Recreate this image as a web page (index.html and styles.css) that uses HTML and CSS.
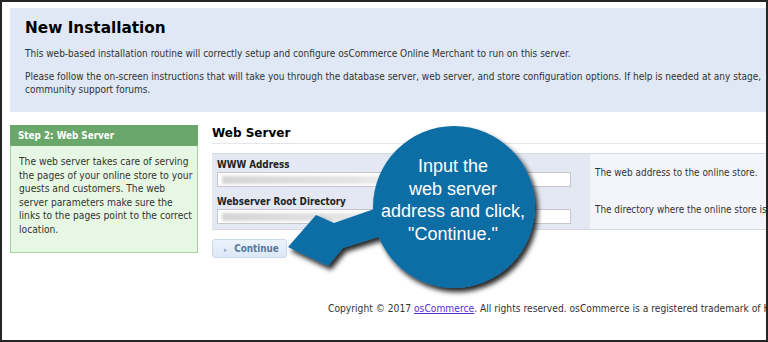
FILE: index.html
```html
<!DOCTYPE html>
<html>
<head>
<meta charset="utf-8">
<link rel="stylesheet" href="styles.css">
</head>
<body>
<div class="frame">
  <div class="page">
    <div class="intro">
      <h1 class="intro-title">New Installation</h1>
      <p class="intro-text">This web-based installation routine will correctly setup and configure osCommerce Online Merchant to run on this server.</p>
      <p class="intro-text">Please follow the on-screen instructions that will take you through the database server, web server, and store configuration options. If help is needed at any stage,<br>community support forums.</p>
    </div>
    <div class="content">
      <div class="step">
        <div class="step-head">Step 2: Web Server</div>
        <div class="step-body">The web server takes care of serving<br>the pages of your online store to your<br>guests and customers. The web<br>server parameters make sure the<br>links to the pages point to the correct<br>location.</div>
      </div>
      <div class="main">
        <h2 class="main-title">Web Server</h2>
        <div class="form">
          <div class="form-fields">
            <div class="field">
              <div class="field-label">WWW Address</div>
              <div class="field-input"><span class="blur blur-long"></span></div>
            </div>
            <div class="field">
              <div class="field-label">Webserver Root Directory</div>
              <div class="field-input field-input-last"><span class="blur blur-short"></span></div>
            </div>
          </div>
          <div class="form-help">
            <div class="help-line help-first">The web address to the online store.</div>
            <div class="help-line">The directory where the online store is installed on the server.</div>
          </div>
        </div>
        <div class="btn"><span class="btn-icon">&#9656;</span>Continue</div>
      </div>
    </div>
    <div class="footer">Copyright &copy; 2017 <a href="#" class="footer-link">osCommerce</a>. All rights reserved. osCommerce is a registered trademark of Harald Ponce de Leon.</div>
  </div>
  <svg class="callout" width="768" height="342" viewBox="0 0 768 342">
    <defs>
      <filter id="sh" x="-20%" y="-20%" width="140%" height="140%">
        <feDropShadow dx="3" dy="4" stdDeviation="2.5" flood-color="#000" flood-opacity="0.85"/>
      </filter>
    </defs>
    <g filter="url(#sh)" fill="#0c6ea6">
      <polygon points="288,247 316,215 334,223 380,207 388,234 343,248 328,266"/>
      <circle cx="454" cy="207" r="81"/>
    </g>
    <g class="callout-text">
      <text x="453" y="172">Input the</text>
      <text x="453" y="195">web server</text>
      <text x="453" y="217">address and click,</text>
      <text x="453" y="240">"Continue."</text>
    </g>
  </svg>
</div>
</body>
</html>
```
FILE: styles.css
```css
html, body {
  margin: 0;
  padding: 0;
  background: #fff;
}
.frame {
  position: relative;
  width: 768px;
  height: 342px;
  box-sizing: border-box;
  border: 2px solid #262626;
  overflow: hidden;
  font-family: "DejaVu Sans Condensed", "DejaVu Sans", sans-serif;
  font-size: 10.2px;
  color: #333;
}
.page {
  width: 1000px;
  padding: 6px 0 0 8px;
}
.intro {
  background: #dfe8f4;
  padding: 10px 15px 10px 15px;
  height: 84px;
}
.intro-title {
  margin: 0 0 9px 0;
  font-family: "DejaVu Sans", sans-serif;
  font-size: 15.3px;
  font-weight: bold;
  color: #000;
  line-height: 20px;
}
.intro-text {
  margin: 0 0 10px 0;
  font-size: 10px;
  line-height: 13px;
  white-space: nowrap;
}
.content {
  display: flex;
  gap: 14px;
  margin-top: 13px;
}
.step {
  width: 188px;
  flex: none;
}
.step-head {
  background: #6aa76a;
  color: #fff;
  font-weight: bold;
  font-size: 9.8px;
  height: 21px;
  line-height: 21px;
  padding-left: 8px;
}
.step-body {
  background: #e6f8e3;
  border: 1px solid #a4d49e;
  border-top: none;
  padding: 9px 8px 0 8px;
  line-height: 13.5px;
  height: 97px;
  white-space: nowrap;
}
.main {
  width: 780px;
}
.main-title {
  margin: 0;
  font-family: "DejaVu Sans", sans-serif;
  font-size: 12px;
  font-weight: bold;
  color: #000;
  line-height: 17px;
  padding-bottom: 1px;
  border-bottom: 1px solid #e4e6ea;
}
.form {
  display: flex;
  margin-top: 9px;
  border-top: 1px solid #d6dbe6;
  border-bottom: 1px solid #d6dbe6;
}
.form-fields {
  width: 378px;
  background: #e4e8f2;
  padding: 4px 0 5px 5px;
  box-sizing: border-box;
}
.field-label {
  font-weight: bold;
  font-size: 9.8px;
  line-height: 13px;
  color: #222;
}
.field-input {
  width: 354px;
  height: 15px;
  background: #fff;
  border: 1px solid #c4c6cc;
  box-sizing: border-box;
  margin: 1px 0 8px 0;
  overflow: hidden;
}
.field-input-last {
  margin-bottom: 0;
}
.blur {
  display: block;
  height: 8px;
  margin: 3px 0 0 4px;
  background: linear-gradient(90deg, #d4d4d4, #e4e4e4 60%, #fff);
  filter: blur(1.5px);
}
.blur-long { width: 220px; }
.blur-short { width: 200px; }
.form-help {
  flex: 1;
  background: #f4f5fb;
  padding: 12px 0 0 5px;
  font-size: 9.9px;
}
.help-line {
  line-height: 13px;
  white-space: nowrap;
}
.help-first {
  margin-bottom: 24px;
}
.btn {
  display: inline-block;
  margin-top: 9px;
  width: 75px;
  height: 19px;
  box-sizing: border-box;
  border: 1px solid #c9d8ea;
  border-radius: 3px;
  background: linear-gradient(#ecf3fc, #dce8f7);
  font-weight: bold;
  font-size: 9.8px;
  color: #58779f;
  line-height: 17px;
  padding-left: 11px;
}
.btn-icon {
  color: #98a8bf;
  font-size: 7px;
  margin-right: 7px;
}
.footer {
  margin-top: 44px;
  padding-left: 318px;
  line-height: 13px;
  white-space: nowrap;
}
.footer-link {
  color: #5a2fd8;
  text-decoration: underline;
}
.callout {
  position: absolute;
  left: -2px;
  top: -2px;
}
.callout-text text {
  fill: #fff;
  font-family: "Liberation Sans", Arial, sans-serif;
  font-size: 18px;
  text-anchor: middle;
}
```
